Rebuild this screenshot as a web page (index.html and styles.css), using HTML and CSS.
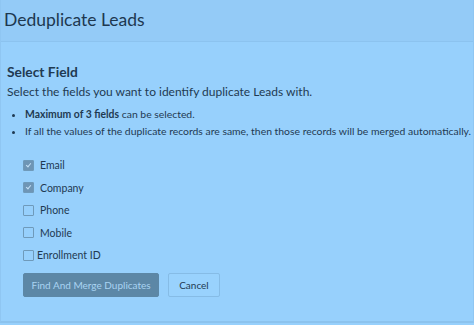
FILE: index.html
```html
<!DOCTYPE html>
<html lang="en">
<head>
    <meta charset="UTF-8">
    <title>Deduplicate Leads</title>
    <link rel="stylesheet" href="styles.css">
</head>
<body>
    <div class="modal">
        <div class="modal-header">
            <h2>Deduplicate Leads</h2>
        </div>
        <div class="modal-body">
            <h3>Select Field</h3>
            <p class="intro">Select the fields you want to identify duplicate Leads with.</p>
            <ul class="notes">
                <li><b>Maximum of 3 fields</b> can be selected.</li>
                <li>If all the values of the duplicate records are same, then those records will be merged automatically.</li>
            </ul>
            <div class="fields">
                <label class="field"><span class="box checked"></span>Email</label>
                <label class="field"><span class="box checked"></span>Company</label>
                <label class="field"><span class="box"></span>Phone</label>
                <label class="field"><span class="box"></span>Mobile</label>
                <label class="field tight"><span class="box"></span>Enrollment ID</label>
            </div>
            <div class="actions">
                <button class="btn primary">Find And Merge Duplicates</button>
                <button class="btn">Cancel</button>
            </div>
        </div>
    </div>
</body>
</html>
```

FILE: styles.css
```css
html, body {
    margin: 0;
    padding: 0;
    background: #97d0fc;
}
body {
    font-family: Lato, Arial, sans-serif;
    color: #1f3a52;
    width: 474px;
    height: 325px;
    overflow: hidden;
}
.modal {
    height: 323px;
    border-left: 1px solid #8fc6f2;
    border-right: 1px solid #8fc6f2;
    border-bottom: 2px solid #8cc3ee;
    box-sizing: border-box;
}
.modal-header {
    height: 42px;
    background: #94cbf7;
    border-bottom: 1px solid #8cc3ef;
    box-sizing: border-box;
    padding: 9px 0 0 3px;
}
.modal-header h2 {
    margin: 0;
    font-size: 17.5px;
    font-weight: 400;
    line-height: 22px;
    color: #1d3850;
}
.modal-body {
    padding: 21px 0 0 6px;
}
h3 {
    margin: 0;
    font-size: 13.8px;
    font-weight: 700;
    line-height: 18px;
}
.intro {
    margin: 4px 0 0;
    font-size: 12px;
    line-height: 14px;
}
.notes {
    margin: 7px 0 0;
    padding-left: 18px;
    font-size: 10.4px;
    line-height: 17px;
    white-space: nowrap;
}
.notes b {
    font-weight: 700;
}
.fields {
    margin-top: 14px;
    padding-left: 16px;
}
.field {
    display: flex;
    align-items: center;
    height: 22.5px;
    font-size: 10.5px;
}
.box {
    width: 9px;
    height: 9px;
    border: 1px solid #6f9aba;
    border-radius: 1px;
    margin-right: 6px;
    position: relative;
}
.box.checked {
    background: #6e95b5;
}
.box.checked::after {
    content: "";
    position: absolute;
    left: 3px;
    top: 1px;
    width: 2px;
    height: 4px;
    border: solid #c4e0f6;
    border-width: 0 1.5px 1.5px 0;
    transform: rotate(40deg);
}
.field.tight .box {
    margin-right: 3px;
}
.actions {
    display: flex;
    gap: 9px;
    margin-top: 6px;
    padding-left: 16px;
}
.btn {
    font-family: inherit;
    font-size: 10px;
    height: 24px;
    padding: 0 10px;
    border: 1px solid #86bce6;
    border-radius: 2px;
    background: #99d2fd;
    color: #1f3a52;
}
.btn.primary {
    background: #5c87a6;
    border-color: #5c87a6;
    color: #a9d3f2;
    padding: 0 7.5px;
}
```
